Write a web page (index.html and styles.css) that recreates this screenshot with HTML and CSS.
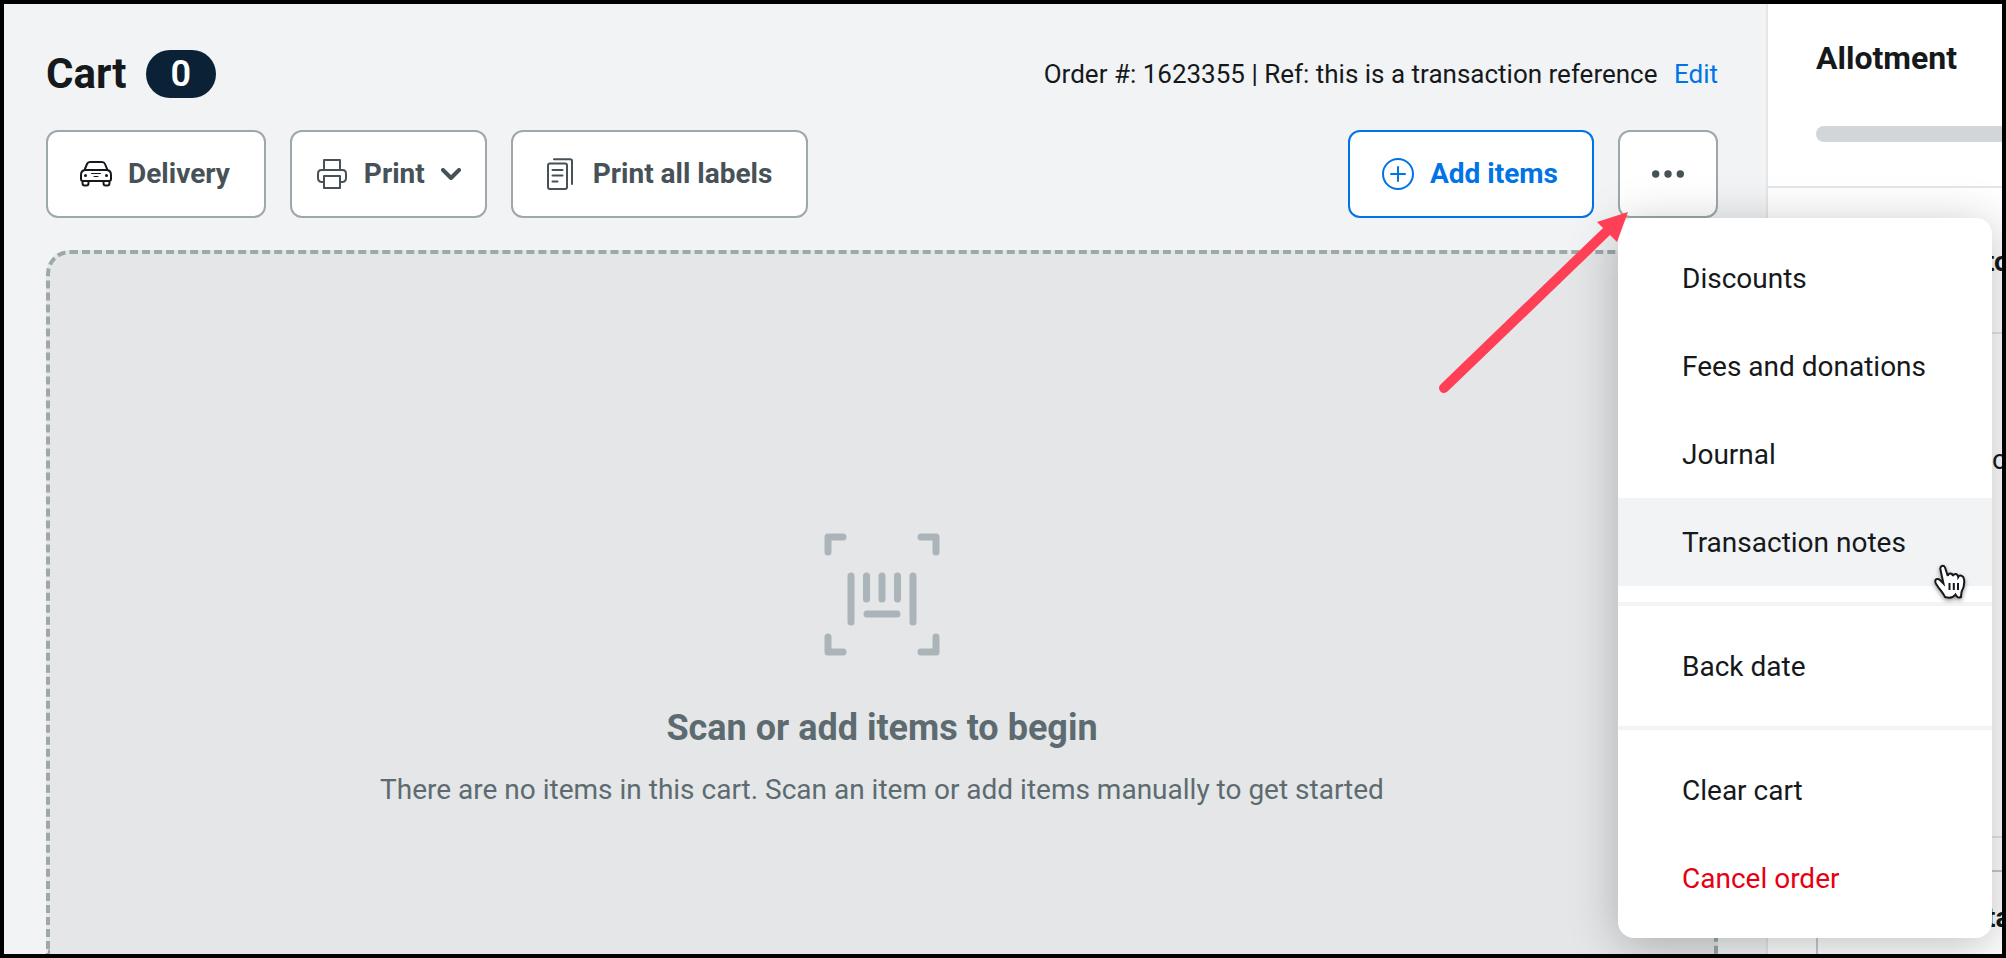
FILE: index.html
```html
<!DOCTYPE html>
<html lang="en">

  <head>

    <meta charset="utf-8">

    <title>Cart</title>

    <link rel="stylesheet" href="styles.css">

  </head>

  <body>
    <!-- Cart column -->
    <main class="cart">
      <header class="cart-header">
        <h1>Cart</h1>
        <span class="count">0</span>
        <p class="order">Order #: 1623355 | Ref: this is a transaction reference <a href="#">Edit</a></p>
      </header>

      <div class="toolbar">
        <button type="button" class="btn">
          <svg class="icon icon-car" width="32" height="26" viewBox="0 0 32 26">
            <path d="M4.500 9 L7 3 Q7.800 1 10 1 H22 Q24.200 1 25 3 L27.500 9 M5 9 H27 Q31 9.500 31 14 V18 Q31 20 29 20 H3 Q1 20 1 18 V14 Q1 9.500 5 9 M2.500 20 V22 Q2.500 24.500 4.500 24.500 H6.500 Q8.500 24.500 8.500 22 V20 M23.500 20 V22 Q23.500 24.500 25.500 24.500 H27.500 Q29.500 24.500 29.500 22 V20"/>
            <path class="thin" d="M11.500 12.500 H20.500 M14 15.500 H18"/>
            <circle class="lamp" cx="5.500" cy="14.500" r="1.500"/>
            <circle class="lamp" cx="26.500" cy="14.500" r="1.500"/>
          </svg>
          Delivery
        </button>
        <button type="button" class="btn btn-print">
          <svg class="icon" width="32" height="30" viewBox="-1 0 32 30">
            <path d="M7 11 V1 H23 V11 M7 23 H4.500 Q1 22.500 1 19 V15 Q1 11 4.500 11 H25.500 Q29 11 29 15 V19 Q29 22.500 25.500 23 H23 M7 17 H23 V29 H7 Z"/>
          </svg>
          Print
          <svg class="icon icon-chevron" width="20" height="12" viewBox="0 0 20 12">
            <path d="M2 2 L10 10 L18 2"/>
          </svg>
        </button>
        <button type="button" class="btn">
          <svg class="icon icon-labels" width="32" height="32" viewBox="-1 0 32 32">
            <rect x="2" y="5.500" width="19" height="25.500" rx="2"/>
            <path d="M8 1.200 H24 Q26 1.200 26 3 V26 M6.500 12 H16.500 M6.500 17.500 H16.500 M6.500 23.500 H11.500"/>
          </svg>
          Print all labels
        </button>
        <button type="button" class="btn btn-add">
          <svg class="icon" width="32" height="32" viewBox="0 0 32 32">
            <circle cx="16" cy="16" r="15"/>
            <path d="M16 9 V23 M9 16 H23"/>
          </svg>
          Add items
        </button>
        <div class="more">
          <button type="button" class="btn btn-more" aria-label="More">
            <svg width="32" height="8" viewBox="0 0 32 8">
              <circle cx="3.700" cy="4" r="3.700"/>
              <circle cx="16" cy="4" r="3.700"/>
              <circle cx="28.300" cy="4" r="3.700"/>
            </svg>
          </button>
          <ul class="menu">
            <li><button type="button">Discounts</button></li>
            <li><button type="button">Fees and donations</button></li>
            <li><button type="button">Journal</button></li>
            <li><button type="button" class="active">Transaction notes</button></li>
            <li class="divided"><button type="button">Back date</button></li>
            <li class="divided"><button type="button">Clear cart</button></li>
            <li><button type="button" class="danger">Cancel order</button></li>
          </ul>
          <!-- Arrow pointing at the more button -->
          <svg class="arrow" width="190" height="182" viewBox="0 0 190 182">
            <path class="shaft" d="M6 176 L168 20"/>
            <path class="head" d="M190 0 L159 10 L179 30 Z"/>
          </svg>
          <!-- Hand cursor -->
          <svg class="cursor" width="32" height="36" viewBox="0 0 32 36">
            <path d="M11 33 C9 28 3 23 1.500 18.500 C0.500 15 3.500 14 6 16 L9.500 19.500 L6.500 6 C5.500 1.500 10 0.500 11.200 4 L13.800 12 C14 8.500 18.500 8.500 19 12 C20 8.800 23.800 9.500 24.200 13 C25.500 10.500 29.500 11.500 30 15 C31 21 29.500 24.500 27.500 28 L27 33 C24 34.500 23 33 21.500 30.500 C19 34 16 34.500 11 33 Z"/>
            <path d="M15.500 19 V26 M19.800 19 V26 M24 19 V26"/>
          </svg>
        </div>
      </div>

      <section class="empty">
        <svg class="scan" width="116" height="123" viewBox="0 0 116 123">
          <path d="M4 19 V4 H19 M97 4 H112 V19 M4 104 V119 H19 M97 119 H112 V104 M27 43 V89 M42.500 43 V66 M58 43 V66 M73.500 43 V66 M89 43 V89 M43 81 H73"/>
        </svg>
        <h2>Scan or add items to begin</h2>
        <p>There are no items in this cart. Scan an item or add items manually to get started</p>
      </section>
    </main>

    <!-- Side column -->
    <aside class="side">
      <section class="allotment">
        <h2>Allotment</h2>
        <div class="bar"></div>
      </section>
      <section class="row"><strong>to</strong></section>
      <section class="details"><span>c</span></section>
      <section class="options">
        <div class="option"><strong>ta</strong></div>
      </section>
    </aside>
  </body>

</html>
```

FILE: styles.css
```css
* {
  box-sizing: border-box;
}

body {
  display: flex;
  height: 100vh;
  margin: 0;
  border: 4px solid #000;
  overflow: hidden;
  background: #f1f3f5;
  color: #16191b;
  font-family: Roboto, "Liberation Sans", sans-serif;
  font-size: 28px;
  line-height: 36px;
}

h1,
h2,
p,
ul {
  margin: 0;
}

button {
  font: inherit;
  color: inherit;
  cursor: pointer;
}

/* Cart column */
.cart {
  display: flex;
  flex: 1;
  flex-direction: column;
  padding: 46px 48px 0 42px;
}

.cart-header {
  display: flex;
  align-items: center;
  height: 48px;
}

h1 {
  font-size: 42px;
  font-weight: 700;
}

.count {
  margin-left: 19px;
  padding: 0 25px;
  border-radius: 24px;
  background: #0b2236;
  color: #fff;
  font-size: 36px;
  font-weight: 600;
  line-height: 48px;
}

.order {
  margin-left: auto;
  font-size: 26px;
}

.order a {
  margin-left: 10px;
  color: #0073e6;
  text-decoration: none;
}

.toolbar {
  display: flex;
  gap: 24px;
  margin: 32px 0;
}

.btn {
  display: flex;
  align-items: center;
  gap: 16px;
  height: 88px;
  padding: 0 34px 0 32px;
  border: 2px solid #9da8ab;
  border-radius: 12px;
  background: #fff;
  color: #465257;
  font-weight: 700;
}

.btn-print {
  padding: 0 24px;
}

.btn-add {
  margin-left: auto;
  border-color: #0073e6;
  color: #0073e6;
}

.btn-more {
  justify-content: center;
  width: 100px;
  padding: 0;
  fill: #465257;
}

.icon {
  fill: none;
  stroke: currentColor;
  stroke-width: 2;
  stroke-linecap: round;
  stroke-linejoin: round;
}

.icon-car {
  color: #16191b;
}

.icon-car .thin {
  stroke-width: 1;
}

.icon-car .lamp {
  fill: currentColor;
  stroke: none;
}

.icon-chevron {
  stroke-width: 4;
}

/* Menu */
.more {
  position: relative;
}

.menu {
  position: absolute;
  top: 88px;
  left: 0;
  z-index: 1;
  width: 374px;
  padding: 16px 0;
  border-radius: 16px;
  background: #fff;
  box-shadow: 0 8px 48px rgba(0, 0, 0, 0.25);
  list-style: none;
}

.menu button {
  width: 100%;
  height: 88px;
  padding: 2px 64px 0;
  border: 0;
  background: none;
  text-align: left;
  white-space: nowrap;
}

.menu .active {
  background: #f1f3f5;
}

.menu .danger {
  color: #e60012;
}

.menu .divided {
  margin-top: 16px;
  padding-top: 16px;
  border-top: 4px solid #f4f4f5;
}

.arrow {
  position: absolute;
  top: 82px;
  left: -180px;
  z-index: 2;
  fill: #ff3f55;
}

.arrow .shaft {
  stroke: #ff3f55;
  stroke-width: 10;
  stroke-linecap: round;
}

.cursor {
  position: absolute;
  top: 434px;
  left: 316px;
  z-index: 2;
  fill: #fff;
  stroke: #16191b;
  stroke-width: 2;
  filter: drop-shadow(0 2px 2px rgba(0, 0, 0, 0.4));
}

/* Empty cart */
.empty {
  display: flex;
  flex: 1;
  flex-direction: column;
  align-items: center;
  padding-top: 279px;
  border: 4px dashed #9da8ab;
  border-bottom: 0;
  border-radius: 24px 24px 0 0;
  background: #e4e6e8;
  color: #5d6b70;
}

.scan {
  fill: none;
  stroke: #abb4b8;
  stroke-width: 7;
  stroke-linecap: round;
  stroke-linejoin: round;
}

.empty h2 {
  margin: 48px 0 20px;
  font-size: 36px;
  font-weight: 700;
  line-height: 48px;
}

/* Side column */
.side {
  width: 236px;
  border-left: 2px solid #e4e6e7;
  background: #fff;
  overflow: hidden;
}

.side section {
  padding-left: 48px;
  border-bottom: 2px solid #e4e6e7;
}

.allotment {
  height: 184px;
  padding-top: 36px;
}

.allotment h2 {
  font-size: 32px;
  font-weight: 700;
}

.bar {
  height: 16px;
  margin-top: 50px;
  border-radius: 8px 0 0 8px;
  background: #d1d6d9;
}

.side .row {
  height: 146px;
  padding: 56px 0 0 217px;
}

.side .details {
  height: 504px;
  padding: 108px 0 0 224px;
}

.options {
  padding-top: 32px;
}

.option {
  height: 96px;
  padding: 28px 0 0 168px;
  border: 2px solid #c4cbcf;
  border-right: 0;
  border-radius: 12px 0 0 12px;
}
```
